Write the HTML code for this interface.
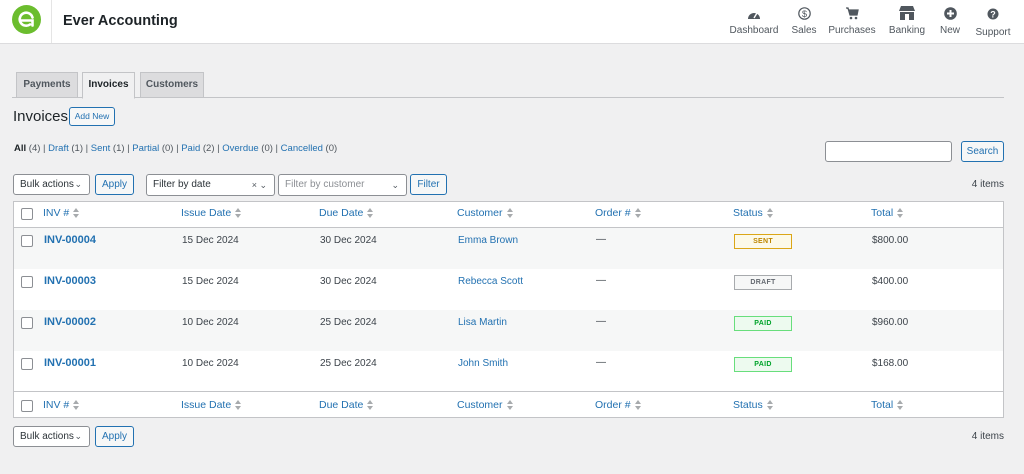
<!DOCTYPE html>
<html><head><meta charset="utf-8"><style>
*{box-sizing:border-box;margin:0;padding:0}
body{width:1024px;height:474px;overflow:hidden;background:#f0f0f1;font-family:"Liberation Sans",sans-serif;color:#3c434a;font-size:11px;position:relative}
.a{position:absolute;white-space:nowrap}
a{color:#2271b1;text-decoration:none}
.hdr{left:0;top:0;width:1024px;height:44px;background:#fff;border-bottom:1px solid #dcdcde}
.nav{text-align:center;color:#50575e;font-size:10px}
.nav svg{display:block;margin:0 auto 5px}
.tab{top:72px;height:26px;border:1px solid #c3c4c7;background:#dcdcde;font-weight:bold;font-size:10px;color:#50575e;text-align:center;line-height:24px}
.btn{border:1px solid #2271b1;color:#2271b1;background:#f6f7f7;border-radius:3px;text-align:center;font-size:10px}
.sel{background:#fff;border:1px solid #8c8f94;border-radius:3px;font-size:10px;padding-left:6px;color:#2c3338}
.tbl{left:13px;top:201px;width:991px;height:217px;background:#fff;border:1px solid #c3c4c7}
.row{left:0;width:989px;height:41px}
.cb{width:12px;height:12px;border:1px solid #8c8f94;border-radius:2px;background:#fff}
.th{color:#2271b1;font-size:10.5px}
.sort{display:inline-block;vertical-align:middle;margin-left:4px;width:7px;height:10px;position:relative}
.sort:before,.sort:after{content:"";position:absolute;left:0;border-left:3.5px solid transparent;border-right:3.5px solid transparent}
.sort:before{top:0;border-bottom:4px solid #a7aaad}
.sort:after{bottom:0;border-top:4px solid #a7aaad}
.badge{width:58px;height:15px;font-size:7px;font-weight:bold;text-align:center;line-height:13px;letter-spacing:.3px}
.chev{position:absolute;right:7px;top:0;font-size:9px;color:#50575e}
</style></head><body>
<div class="a hdr"></div>
<svg class="a" style="left:12px;top:5px" width="29" height="29" viewBox="0 0 29 29"><circle cx="14.5" cy="14.5" r="14.5" fill="#6bbd2e"/><path d="M20.5 12.5A6.5 6.5 0 1 0 18 19.5 M8.5 15.5h12v5" stroke="#fff" stroke-width="2.6" fill="none" stroke-linecap="round"/></svg>
<div class="a" style="left:51px;top:0;width:1px;height:43px;background:#e5e5e5"></div>
<div class="a" style="left:63px;top:13px;font-size:14.5px;font-weight:bold;color:#1d2327">Ever Accounting</div>
<div class="a nav" style="left:728px;top:8px;width:52px"><svg width="14" height="12" viewBox="0 0 14 12"><path d="M1 11a6 6 0 1 1 12 0z" fill="#50575e"/><path d="M7 10l3-5" stroke="#fff" stroke-width="1.4"/></svg>Dashboard</div>
<div class="a nav" style="left:790px;top:7px;width:28px"><svg width="13" height="13" viewBox="0 0 13 13"><circle cx="6.5" cy="6.5" r="5.7" fill="none" stroke="#50575e" stroke-width="1.2"/><text x="6.5" y="10" font-size="9" text-anchor="middle" fill="#50575e" font-family="Liberation Sans">$</text></svg>Sales</div>
<div class="a nav" style="left:828px;top:7px;width:48px"><svg width="14" height="13" viewBox="0 0 14 13"><path d="M1 1h2l2 7h7l1-5H4" fill="#50575e" stroke="#50575e" stroke-width="1.3"/><circle cx="6" cy="11" r="1.3" fill="#50575e"/><circle cx="11" cy="11" r="1.3" fill="#50575e"/></svg>Purchases</div>
<div class="a nav" style="left:886px;top:6px;width:42px"><svg width="16" height="14" viewBox="0 0 16 14"><path d="M2 0h12l2 5H0z" fill="#50575e"/><rect x="1" y="6" width="14" height="8" fill="#50575e"/><rect x="6" y="8" width="4" height="6" fill="#fff"/></svg>Banking</div>
<div class="a nav" style="left:936px;top:7px;width:28px"><svg width="13" height="13" viewBox="0 0 13 13"><circle cx="6.5" cy="6.5" r="6.3" fill="#50575e"/><path d="M6.5 3v7M3 6.5h7" stroke="#fff" stroke-width="2"/></svg>New</div>
<div class="a nav" style="left:973px;top:8px;width:40px"><svg width="12" height="12" viewBox="0 0 12 12"><circle cx="6" cy="6" r="5.5" fill="#50575e"/><text x="6" y="9.5" font-size="9" font-weight="bold" text-anchor="middle" fill="#fff" font-family="Liberation Sans">?</text></svg><span style="position:relative;top:2px">Support</span></div>

<div class="a" style="left:12px;top:97px;width:992px;height:1px;background:#c3c4c7"></div>
<div class="a tab" style="left:16px;width:62px">Payments</div>
<div class="a tab" style="left:82px;width:53px;background:#f0f0f1;border-bottom-color:#f0f0f1;color:#1d2327;height:27px">Invoices</div>
<div class="a tab" style="left:140px;width:64px">Customers</div>

<div class="a" style="left:13px;top:108px;font-size:15px;color:#1d2327">Invoices</div>
<div class="a btn" style="left:69px;top:107px;width:46px;height:19px;font-size:8.5px;line-height:17px">Add New</div>
<div class="a" style="left:14px;top:143px;font-size:9.5px;color:#50575e"><b style="color:#1d2327">All</b> (4) | <a>Draft</a> (1) | <a>Sent</a> (1) | <a>Partial</a> (0) | <a>Paid</a> (2) | <a>Overdue</a> (0) | <a>Cancelled</a> (0)</div>

<div class="a sel" style="left:825px;top:141px;width:127px;height:21px"></div>
<div class="a btn" style="left:961px;top:141px;width:43px;height:21px;line-height:19px">Search</div>

<div class="a sel" style="left:13px;top:174px;width:77px;height:21px;line-height:19px">Bulk actions<span class="chev" style="line-height:19px">⌄</span></div>
<div class="a btn" style="left:95px;top:174px;width:39px;height:21px;line-height:19px">Apply</div>
<div class="a sel" style="left:146px;top:174px;width:129px;height:22px;line-height:20px">Filter by date<span class="chev" style="line-height:20px">× ⌄</span></div>
<div class="a sel" style="left:278px;top:174px;width:129px;height:22px;line-height:20px;color:#8c8f94">Filter by customer<span class="chev" style="line-height:20px">⌄</span></div>
<div class="a btn" style="left:410px;top:174px;width:37px;height:21px;line-height:19px">Filter</div>
<div class="a" style="right:20px;top:179px;font-size:10px">4 items</div>

<div class="a tbl">
<div class="a row" style="top:0;height:26px;border-bottom:1px solid #c3c4c7"></div>
<div class="a row" style="top:26px;background:#f6f7f7"></div>
<div class="a row" style="top:108px;background:#f6f7f7"></div>
<div class="a row" style="top:189px;height:26px;border-top:1px solid #c3c4c7"></div>
</div>
<div class="a" style="left:0;top:207px">
<div class="a cb" style="left:21px;top:1px"></div>
<div class="a th" style="left:43px;top:0">INV #<span class="sort"></span></div>
<div class="a th" style="left:181px;top:0">Issue Date<span class="sort"></span></div>
<div class="a th" style="left:319px;top:0">Due Date<span class="sort"></span></div>
<div class="a th" style="left:457px;top:0">Customer<span class="sort"></span></div>
<div class="a th" style="left:595px;top:0">Order #<span class="sort"></span></div>
<div class="a th" style="left:733px;top:0">Status<span class="sort"></span></div>
<div class="a th" style="left:871px;top:0">Total<span class="sort"></span></div>
</div>
<div class="a" style="left:0;top:399px">
<div class="a cb" style="left:21px;top:1px"></div>
<div class="a th" style="left:43px;top:0">INV #<span class="sort"></span></div>
<div class="a th" style="left:181px;top:0">Issue Date<span class="sort"></span></div>
<div class="a th" style="left:319px;top:0">Due Date<span class="sort"></span></div>
<div class="a th" style="left:457px;top:0">Customer<span class="sort"></span></div>
<div class="a th" style="left:595px;top:0">Order #<span class="sort"></span></div>
<div class="a th" style="left:733px;top:0">Status<span class="sort"></span></div>
<div class="a th" style="left:871px;top:0">Total<span class="sort"></span></div>
</div>

<div class="a" style="left:0;top:235px;font-size:10px">
<div class="a cb" style="left:21px;top:0"></div><a class="a" style="left:44px;top:-1px;font-weight:bold;font-size:11px">INV-00004</a><div class="a" style="left:182px;top:0">15 Dec 2024</div><div class="a" style="left:320px;top:0">30 Dec 2024</div><a class="a" style="left:458px;top:0">Emma Brown</a><div class="a" style="left:596px;top:-1px">—</div><div class="a badge" style="left:734px;top:-1px;background:#fcf9e8;border:1px solid #dba617;color:#bd8600">SENT</div><div class="a" style="left:872px;top:0">$800.00</div>
</div>
<div class="a" style="left:0;top:276px;font-size:10px">
<div class="a cb" style="left:21px;top:0"></div><a class="a" style="left:44px;top:-1px;font-weight:bold;font-size:11px">INV-00003</a><div class="a" style="left:182px;top:0">15 Dec 2024</div><div class="a" style="left:320px;top:0">30 Dec 2024</div><a class="a" style="left:458px;top:0">Rebecca Scott</a><div class="a" style="left:596px;top:-1px">—</div><div class="a badge" style="left:734px;top:-1px;background:#f6f7f7;border:1px solid #a7aaad;color:#646970">DRAFT</div><div class="a" style="left:872px;top:0">$400.00</div>
</div>
<div class="a" style="left:0;top:317px;font-size:10px">
<div class="a cb" style="left:21px;top:0"></div><a class="a" style="left:44px;top:-1px;font-weight:bold;font-size:11px">INV-00002</a><div class="a" style="left:182px;top:0">10 Dec 2024</div><div class="a" style="left:320px;top:0">25 Dec 2024</div><a class="a" style="left:458px;top:0">Lisa Martin</a><div class="a" style="left:596px;top:-1px">—</div><div class="a badge" style="left:734px;top:-1px;background:#edfaef;border:1px solid #68de7c;color:#00a32a">PAID</div><div class="a" style="left:872px;top:0">$960.00</div>
</div>
<div class="a" style="left:0;top:358px;font-size:10px">
<div class="a cb" style="left:21px;top:0"></div><a class="a" style="left:44px;top:-1px;font-weight:bold;font-size:11px">INV-00001</a><div class="a" style="left:182px;top:0">10 Dec 2024</div><div class="a" style="left:320px;top:0">25 Dec 2024</div><a class="a" style="left:458px;top:0">John Smith</a><div class="a" style="left:596px;top:-1px">—</div><div class="a badge" style="left:734px;top:-1px;background:#edfaef;border:1px solid #68de7c;color:#00a32a">PAID</div><div class="a" style="left:872px;top:0">$168.00</div>
</div>

<div class="a sel" style="left:13px;top:426px;width:77px;height:21px;line-height:19px">Bulk actions<span class="chev" style="line-height:19px">⌄</span></div>
<div class="a btn" style="left:95px;top:426px;width:39px;height:21px;line-height:19px">Apply</div>
<div class="a" style="right:20px;top:431px;font-size:10px">4 items</div>
</body></html>
